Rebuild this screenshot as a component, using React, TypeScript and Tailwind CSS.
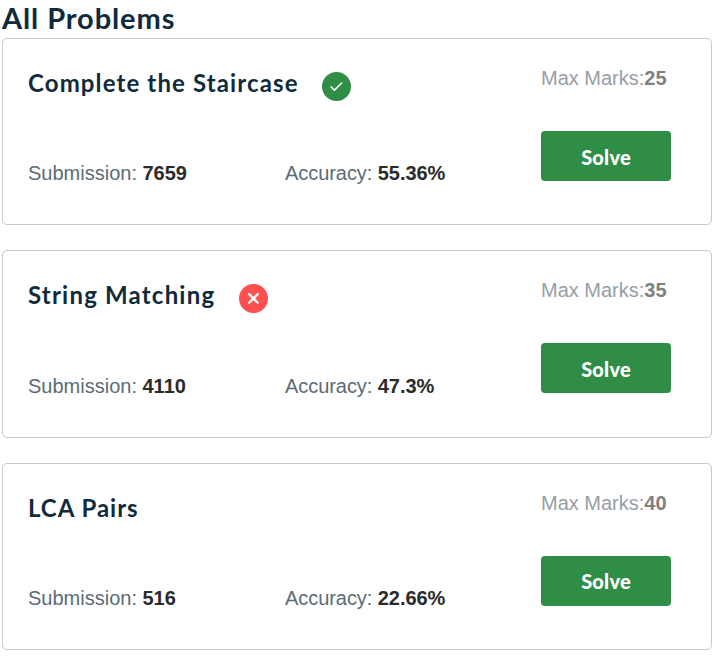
type Problem = {
  title: string;
  titleClass: string;
  status?: "solved" | "failed";
  submissions: string;
  accuracy: string;
  marks: number;
};

const problems: Problem[] = [
  { title: "Complete the Staircase", titleClass: "w-[270px] tracking-[1.12px]", status: "solved", submissions: "7659", accuracy: "55.36%", marks: 25 },
  { title: "String Matching", titleClass: "w-[187px] tracking-[1.2px]", status: "failed", submissions: "4110", accuracy: "47.3%", marks: 35 },
  { title: "LCA Pairs", titleClass: "w-[110px] tracking-[1px]", submissions: "516", accuracy: "22.66%", marks: 40 },
];

function StatusIcon({ status }: { status: "solved" | "failed" }) {
  const solved = status === "solved";
  return (
    <svg className={`ml-6 size-[29px] shrink-0 ${solved ? "mt-[32.5px]" : "mt-[33px]"}`} viewBox="0 0 29 29" fill="none" stroke="white" strokeLinecap="round" strokeLinejoin="round">
      <circle cx="14.5" cy="14.5" r="14.5" fill={solved ? "#2f8d46" : "#ff4f4f"} stroke="none" />
      {solved ? (
        <path d="M9 14.8 12.3 18.2 19.7 11" strokeWidth="1.6" />
      ) : (
        <path d="M10.1 10.1 18.7 18.7M18.7 10.1 10.1 18.7" strokeWidth="2.3" />
      )}
    </svg>
  );
}

function ProblemCard({ problem }: { problem: Problem }) {
  return (
    <article className="flex h-[187.4px] w-[710px] rounded-[5px] border border-[#c8c8c8] bg-white pl-[25px]">
      <div className="w-[513px]">
        <div className="flex h-[119.2px] items-start">
          <h2 className={`mt-7 shrink-0 whitespace-nowrap text-2xl leading-8 font-bold text-[#0f2b3c] ${problem.titleClass}`}>{problem.title}</h2>
          {problem.status && <StatusIcon status={problem.status} />}
        </div>
        <div className="flex font-['Liberation_Sans',Arial,sans-serif] text-xl leading-[30px] text-[#5b6b77]">
          <p className="w-[257px]">
            Submission: <b className="text-[#2b2b2b]">{problem.submissions}</b>
          </p>
          <p className="tracking-[-0.06px]">
            Accuracy: <b className="text-[#2b2b2b]">{problem.accuracy}</b>
          </p>
        </div>
      </div>
      <div className="pt-6">
        <p className="font-['Liberation_Sans',Arial,sans-serif] text-xl leading-[30px] whitespace-nowrap text-[#969ea5]">
          Max Marks:<b className="text-[#808080]">{problem.marks}</b>
        </p>
        <button className="mt-[38px] flex h-[50px] w-[130px] items-center justify-center rounded bg-[#2f8d46] pt-px text-xl font-black tracking-[0.2px] text-white">
          Solve
        </button>
      </div>
    </article>
  );
}

export default function App() {
  return (
    <main className="h-[667px] w-[722px] overflow-hidden bg-white pl-0.5 font-['Lato',sans-serif]">
      <h1 className="h-[38px] text-[29px] leading-9 font-bold tracking-[0.9px] whitespace-nowrap text-[#0f2b3c]">All Problems</h1>
      <div className="flex flex-col gap-[25px]">
        {problems.map((problem) => (
          <ProblemCard key={problem.title} problem={problem} />
        ))}
      </div>
    </main>
  );
}
